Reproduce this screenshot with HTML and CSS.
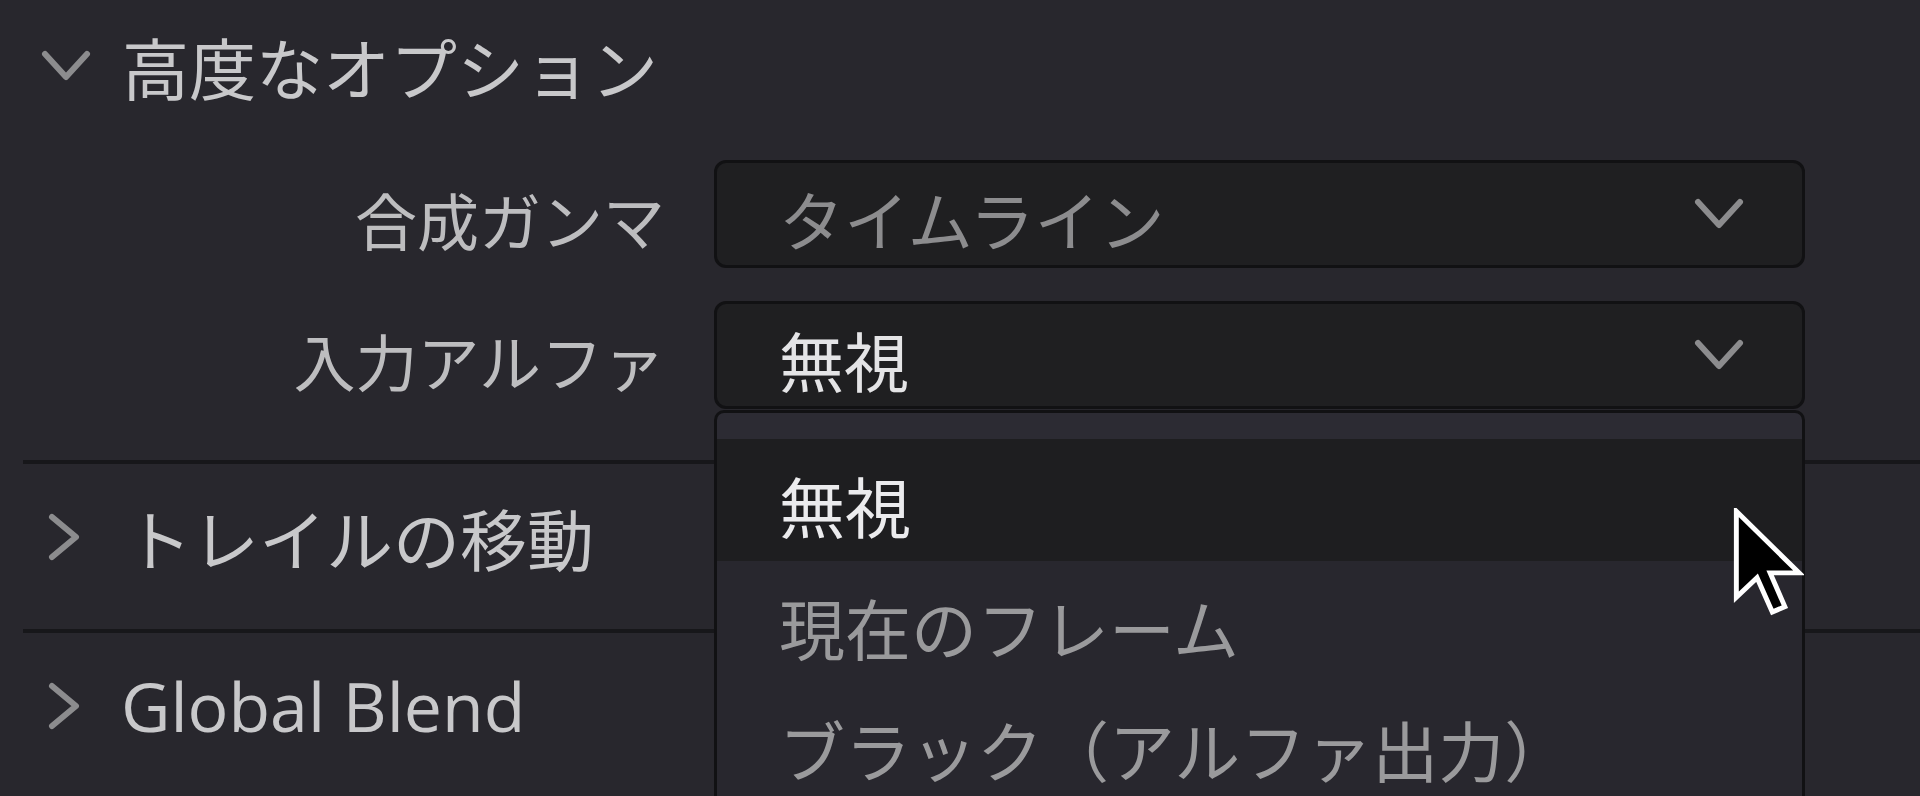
FILE: index.html
```html
<!DOCTYPE html>
<html>
<head>
    <title>Inspector</title>
    <link rel="stylesheet" href="styles.css">
</head>
<body>

    <div class="inspector">

        <!-- Advanced options (expanded) -->
        <div class="section">
            <div class="section-head">
                <svg class="twist" viewBox="0 0 52 36"><path d="M5 6 L26 29 L47 6"/></svg>
                <span>高度なオプション</span>
            </div>

            <div class="field-row">
                <label>合成ガンマ</label>
                <div class="combo dim">
                    <span>タイムライン</span>
                    <svg class="arrow" viewBox="0 0 52 36"><path d="M5 6 L26 29 L47 6"/></svg>
                </div>
            </div>

            <div class="field-row">
                <label>入力アルファ</label>
                <div class="combo">
                    <span>無視</span>
                    <svg class="arrow" viewBox="0 0 52 36"><path d="M5 6 L26 29 L47 6"/></svg>

                    <div class="combo-list">
                        <div class="item selected">無視</div>
                        <div class="item">現在のフレーム</div>
                        <div class="item">ブラック（アルファ出力）</div>
                    </div>
                </div>
            </div>
        </div>

        <div class="section closed">
            <div class="section-head">
                <svg class="twist" viewBox="0 0 52 52"><path d="M12 6 L36 26 L12 46"/></svg>
                <span>トレイルの移動</span>
            </div>
        </div>

        <div class="section closed">
            <div class="section-head">
                <svg class="twist" viewBox="0 0 52 52"><path d="M12 6 L36 26 L12 46"/></svg>
                <span class="latin">Global Blend</span>
            </div>
        </div>

    </div>

    <!-- mouse pointer -->
    <svg class="pointer" viewBox="0 0 13 20">
        <path d="M0.6 0.6 L0.6 16.4 L4.4 12.8 L7.2 19.1 L9.5 18.1 L6.8 11.9 L12.1 11.9 Z"/>
    </svg>

</body>
</html>
```

FILE: styles.css
```css
/* Dark inspector panel */
html, body {
    margin: 0;
    height: 796px;
    overflow: hidden;
}
body {
    background-color: #28272d;
    font-family: "Open Sans", "Noto Sans CJK JP", sans-serif;
    color: #c6c6c8;
}

.section {
    margin-left: 23px;
}
.section + .section {
    border-top: 4px solid #17171a;
}

.section-head {
    display: flex;
    align-items: center;
    gap: 30px;
    height: 132px;
    padding-left: 17px;
    font-size: 67px;
    color: #c8c8ca;
    white-space: nowrap;
}
.closed .section-head {
    box-sizing: border-box;
    height: 165px;
    padding-bottom: 20px;
    gap: 33px;
}
.section-head .latin {
    font-size: 68px;
    margin-left: -4px;
}

.twist {
    width: 52px;
    height: 36px;
    flex: none;
}
.closed .twist {
    height: 52px;
}
.twist path, .arrow path {
    fill: none;
    stroke: #8c8c8e;
    stroke-width: 6;
    stroke-linecap: round;
    stroke-linejoin: round;
}

/* Label + combo rows */
.field-row {
    display: grid;
    grid-template-columns: 642px 1091px;
    column-gap: 49px;
    align-items: center;
    margin-top: 28px;
}
.field-row + .field-row {
    margin-top: 33px;
}
.field-row:last-child {
    padding-bottom: 51px;
}
.field-row label {
    text-align: right;
    font-size: 62px;
    color: #bdbdbf;
    white-space: nowrap;
    padding-top: 10px;
}

.combo {
    position: relative;
    box-sizing: border-box;
    height: 108px;
    display: flex;
    align-items: center;
    justify-content: space-between;
    padding: 8px 57px 0 62px;
    background-color: #1f1f21;
    border: 3px solid #111113;
    border-radius: 12px;
    font-size: 65px;
    color: #e4e4e6;
    white-space: nowrap;
}
.combo.dim {
    color: #8c8c8e;
}
.arrow {
    width: 52px;
    height: 36px;
    margin-top: -8px;
}

/* Open dropdown list */
.combo-list {
    position: absolute;
    top: 106px;
    left: -3px;
    right: -3px;
    height: 420px;
    box-sizing: border-box;
    padding-top: 26px;
    background-color: #28272e;
    border: 3px solid #111113;
    border-bottom: none;
    border-radius: 10px 10px 0 0;
    background-image: linear-gradient(#2c2b33, #2c2b33);
    background-size: 100% 26px;
    background-repeat: no-repeat;
}
.item {
    height: 122px;
    display: flex;
    align-items: center;
    padding-left: 62px;
    padding-top: 8px;
    box-sizing: border-box;
    font-size: 66px;
    color: #9a9a9c;
}
.item.selected {
    background-color: #1e1e20;
    color: #ebebed;
}

.pointer {
    position: absolute;
    left: 1733px;
    top: 508px;
    width: 71px;
    height: 109px;
}
.pointer path {
    fill: #000;
    stroke: #fff;
    stroke-width: 0.9;
    stroke-linejoin: miter;
}
```
